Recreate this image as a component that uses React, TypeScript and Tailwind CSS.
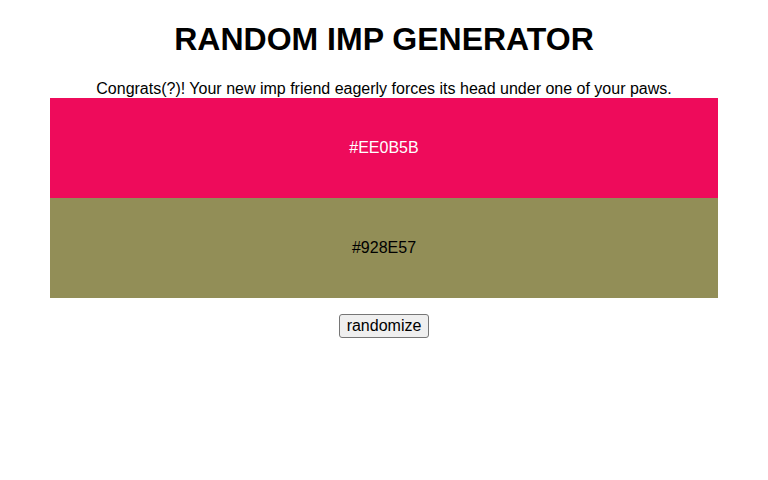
const COLORS = [
  { hex: '#EE0B5B', text: 'text-white' },
  { hex: '#928E57', text: 'text-black' },
];

export default function App() {
  return (
    <div className="min-h-[480px] bg-white text-center text-black font-['Liberation_Sans',Arial,sans-serif]">
      <h1 className="pt-[21px] pb-[21px] text-[32px] font-bold leading-[37px]">RANDOM IMP GENERATOR</h1>
      <div className="mt-px text-base leading-[18px]">
        Congrats(?)! Your new imp friend eagerly forces its head under one of your paws.
      </div>
      <div className="mx-[50px]">
        {COLORS.map(c => (
          <div
            key={c.hex}
            className={`flex h-[100px] items-center justify-center ${c.text}`}
            style={{ backgroundColor: c.hex }}
          >
            {c.hex}
          </div>
        ))}
      </div>
      <button className="mt-4 h-6 rounded-[3px] border border-[#767676] bg-[#efefef] px-[7px] text-base leading-[18px]">
        randomize
      </button>
    </div>
  );
}
